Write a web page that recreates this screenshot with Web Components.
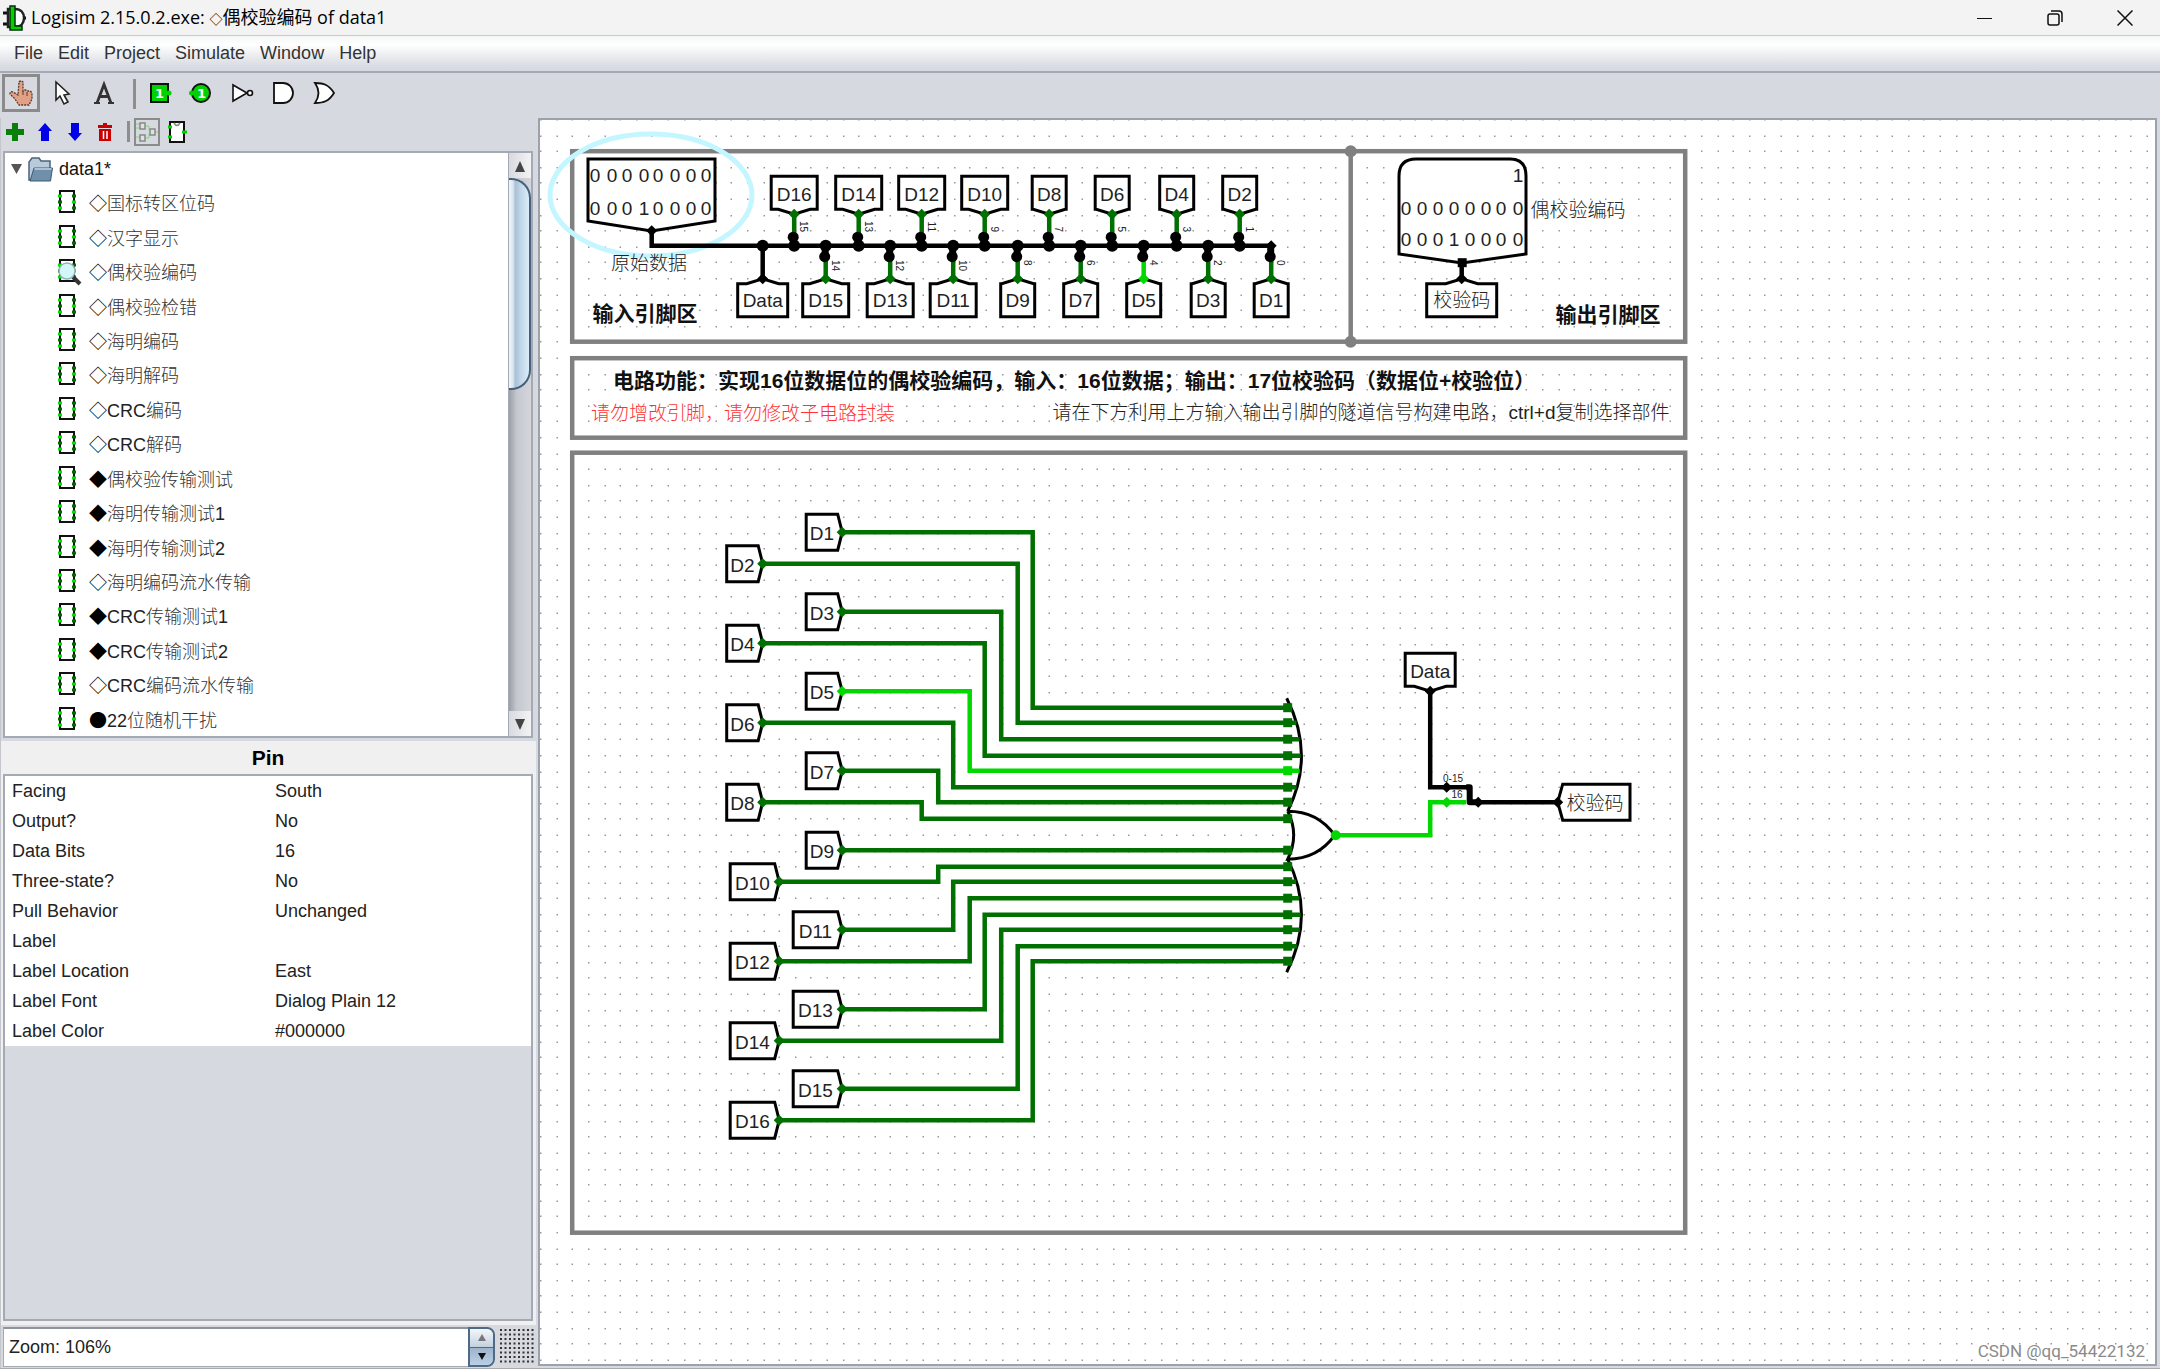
<!DOCTYPE html>
<html lang="zh-CN">
<head>
<meta charset="utf-8">
<title>Logisim 2.15.0.2.exe: ◇偶校验编码 of data1</title>
<style>
html, body { margin: 0; height: 100%; }
body {
  --ui: "Liberation Sans", "Noto Sans CJK SC", sans-serif;
  --cjk: "Noto Sans CJK SC", sans-serif;
  --panel: #d6d9df;
  --line: #9ba2ab;
  font-family: var(--ui); font-size: 18px; color: #222; background: var(--panel); overflow: hidden;
}
</style>
</head>
<body>
<logisim-window>
  <title-bar slot="title">Logisim 2.15.0.2.exe: <span style="font-size:13px">◇</span>偶校验编码 of data1</title-bar>
  <menu-bar slot="menu"></menu-bar>
  <main-tools slot="tools"></main-tools>
  <explorer-tools slot="side"></explorer-tools>
  <project-tree slot="side" name="data1*"></project-tree>
  <attribute-table slot="side" heading="Pin"></attribute-table>
  <zoom-control slot="side"></zoom-control>
  <circuit-canvas slot="canvas">CSDN @qq_54422132</circuit-canvas>
</logisim-window>
<script>
class Part extends HTMLElement {
  connectedCallback() {
    if (this.shadowRoot) return;
    this.attachShadow({ mode: 'open' }).innerHTML = `<style>:host,*{box-sizing:border-box}button{font:inherit;color:inherit;background:none;border:0;padding:0;margin:0}svg{display:block}${this.css()}</style>${this.html()}`;
  }
  css() { return ''; }
  html() { return ''; }
}

class LogisimWindow extends Part {
  css() { return `
    :host{display:flex;flex-direction:column;height:100vh;background:var(--panel);border-bottom:1px solid #aaa}
    .main{flex:1;display:flex;min-height:0}
    aside{width:536px;flex:none;display:flex;flex-direction:column;border-left:1px solid #c4c6cb}
    .view{flex:1;min-width:0;margin:0 3px 2px 2px;display:flex}
  `; }
  html() { return `<slot name="title"></slot><slot name="menu"></slot><slot name="tools"></slot>
    <div class="main"><aside><slot name="side"></slot></aside><div class="view"><slot name="canvas"></slot></div></div>`; }
}

class TitleBar extends Part {
  css() { return `
    :host{display:flex;align-items:center;height:36px;flex:none;background:#f3f3f3;border-bottom:1px solid #c9c9c9;color:#000;font:18px/36px "Open Sans","Noto Sans CJK SC",sans-serif}
    .logo{margin:0 4px 0 3px}
    h1{font:inherit;margin:0;flex:1;white-space:nowrap}
    button{width:70px;height:35px;display:grid;place-items:center}
    svg{fill:none;stroke:#111}
  `; }
  html() { return `
    <svg class="logo" width="24" height="26" viewBox="0 0 24 26">
      <path d="M0 8h5M0 19h5M19 13h4" stroke="#111" stroke-width="3"/>
      <path d="M5 4h7c6 0 9 4 9 9s-3 9-9 9H5z" fill="#fff" stroke="#222" stroke-width="2.5"/>
      <path d="M7 1h5v20h7v4H7z" fill="#00d200" stroke="#053005" stroke-width="1.5"/>
    </svg>
    <h1><slot></slot></h1>
    <button aria-label="Minimize"><svg width="16" height="16"><path d="M0 8.500h15"/></svg></button>
    <button aria-label="Restore"><svg width="16" height="16" stroke-width="1.500"><rect x="1" y="4" width="11" height="11" rx="2"/><path d="M4 1h8q3 0 3 3v8"/></svg></button>
    <button aria-label="Close"><svg width="16" height="16" stroke-width="1.500"><path d="M.5.500l15 15M15.500.500l-15 15"/></svg></button>`; }
}

class MenuBar extends Part {
  css() { return `
    :host{display:block;height:37px;flex:none;background:linear-gradient(#f4f6f6,#fff 25%,#d9dce2 85%,#d6d9df);border-bottom:2px solid #a4aab3}
    nav{display:flex;gap:15px;padding-left:14px;height:35px;align-items:center;color:#333}
  `; }
  html() { return `<nav>${['File','Edit','Project','Simulate','Window','Help'].map(t => `<button>${t}</button>`).join('')}</nav>`; }
}

class MainTools extends Part {
  css() { return `
    :host{display:flex;height:45px;flex:none;padding:1px 2px 0;gap:3px}
    button{width:38px;height:38px;display:grid;place-items:center}
    .on{border:3px solid #8b8b8b}
    i{width:3px;height:30px;background:#8e8e8e;margin:5px 2px 0 8px}
    text{font:bold 13px "DejaVu Sans",sans-serif;fill:#fff}
  `; }
  html() {
    const b = (label, s, on = '') => `<button class="${on}" aria-label="${label}"><svg width="24" height="26" viewBox="0 0 24 26">${s}</svg></button>`;
    return b('Poke', `<path d="M10 2q2-2 4 0v9l2-1q2 0 3 1l2 0q2 1 2 3v5l-3 6H10l-4-6-5-5q0-3 3-2l5 3z" fill="#e2a184" stroke="#5a3a2c" stroke-width="1.3" stroke-dasharray="2 1"/><path d="M14 11v4M18 12v4" stroke="#5a3a2c"/>`, 'on')
      + b('Edit', `<path d="M6 2v18l4-4 4 8 4-2-4-7 5-1z" fill="#fff" stroke="#222" stroke-width="1.6"/>`)
      + b('Text', `<path d="M3 23h6M17 23h6" stroke="#333" stroke-width="2"/><path d="M6 23L13 4.500L20 23M8.500 16.500h9" fill="none" stroke="#333" stroke-width="2.800"/>`)
      + '<i></i>'
      + b('Input pin', `<rect x="3" y="4" width="17" height="18" fill="#00d200" stroke="#111" stroke-width="2"/><circle cx="21" cy="13" r="2.500" fill="#00d200"/><text x="7" y="18">1</text>`)
      + b('Output pin', `<circle cx="12" cy="13" r="9" fill="#00d200" stroke="#111" stroke-width="2"/><circle cx="2.500" cy="13" r="2.500" fill="#00d200"/><text x="8" y="18">1</text>`)
      + b('NOT gate', `<path d="M3 5v16l14-8z" fill="#fff" stroke="#111" stroke-width="1.600"/><circle cx="20" cy="13" r="2.500" fill="#fff" stroke="#111" stroke-width="1.600"/>`)
      + b('AND gate', `<path d="M3 3h9a10 10 0 0 1 0 20H3z" fill="#fff" stroke="#111" stroke-width="1.800"/>`)
      + b('OR gate', `<path d="M3 3c9 0 14 2 19 10-5 8-10 10-19 10q7-10 0-20z" fill="#fff" stroke="#111" stroke-width="1.800"/>`);
  }
}

class ExplorerTools extends Part {
  css() { return `
    :host{display:flex;height:33px;flex:none;padding-left:1px;gap:4px}
    button{width:26px;height:28px;display:grid;place-items:center}
    .on{border:2px solid #8b8b8b}
    i{width:3px;height:21px;background:#8e8e8e;margin:3px 0 0 5px}
  `; }
  html() {
    const b = (label, s, on = '') => `<button class="${on}" aria-label="${label}"><svg width="22" height="24" viewBox="0 0 22 24">${s}</svg></button>`;
    return b('Add circuit', `<path d="M8 3h6v6h6v6h-6v6H8v-6H2V9h6z" fill="#0a7d0a"/>`)
      + b('Move up', `<path d="M11 3l7 8h-3v10H7V11H4z" fill="#0000e6"/>`)
      + b('Move down', `<path d="M11 21l7-8h-3V3H7v10H4z" fill="#0000e6"/>`)
      + b('Remove', `<path d="M4 5h5V3h4v2h5v3H4zM5 9h12v12H5z" fill="#cc0000"/><path d="M9.500 11v8M13 11v8" stroke="#fff" stroke-width="1.500"/>`)
      + '<i></i>'
      + b('Edit layout', `<path d="M0 4h4M0 8h4M9 6h4v4M0 17h4M9 18h4v-4M17 12h5" fill="none" stroke="#7fd67f"/><g fill="#dfe1e6" stroke="#888" stroke-width="1.500"><rect x="4" y="3" width="5" height="6"/><rect x="4" y="15" width="5" height="6"/><rect x="14" y="9" width="5" height="6"/></g>`, 'on')
      + b('Edit appearance', `<rect x="4" y="2" width="14" height="20" fill="#fff" stroke="#111" stroke-width="2"/><path d="M8 3q3 5 6 0" fill="none" stroke="#888" stroke-width="1.500"/><path d="M2 7h4M2 17h4M16 12h5" stroke="#00d200" stroke-width="3"/>`);
  }
}

class CircuitIcon extends Part {
  css() { return `:host{display:block;width:26px;height:30px}svg{overflow:visible}`; }
  html() {
    const lens = this.hasAttribute('open') ? `<path d="M16 21l7 7" stroke="#333" stroke-width="4"/><circle cx="10" cy="15" r="8" fill="#d3f6f8" stroke="#8fb5b8" stroke-width="1.500"/>` : '';
    return `<svg width="26" height="30" viewBox="0 0 26 30"><rect x="3" y="4" width="14" height="21" fill="#fff" stroke="#111" stroke-width="2"/>
      <path d="M1 9h4M1 21h4M15 15h4" stroke="#00e000" stroke-width="3"/><path d="M1 15h4M15 9h4M15 21h4" stroke="#006a00" stroke-width="3"/>${lens}</svg>`;
  }
}

class ProjectTree extends Part {
  css() { return `
    :host{display:flex;height:587px;flex:none;margin:0 3px 0 2px;border:2px solid #a4aab3;background:#fff}
    .tree{flex:1;display:flex;flex-direction:column;color:#111}
    .root{display:flex;align-items:center;height:32px;padding-left:6px}
    .root svg{margin-right:6px}
    ul{list-style:none;margin:0;padding:0;flex:1;display:grid;grid-auto-rows:1fr}
    li{display:flex;align-items:center;padding-left:52px;gap:6px;white-space:nowrap}
    li span{color:#333;font-weight:300}
    b{font:18px var(--cjk);color:#000}
    em{font-style:normal;color:#222;font-weight:400}
    .bar{width:23px;display:flex;flex-direction:column;border-left:1px solid #a4aab3;background:linear-gradient(90deg,#9b9ea6,#c6c8cf 35%,#d4d6dc)}
    .bar button{height:25px;background:linear-gradient(90deg,#d8dae0,#f3f3f5);display:grid;place-items:center}
    .thumb{height:212px;border:2px solid #44617b;border-left:0;border-radius:0 20px 20px 0;background:linear-gradient(90deg,#f0f5fa,#dbe6f0 20%,#a9c0d6 32%,#c2d7e9 60%,#dcecf8)}
    .gap{flex:1}
  `; }
  html() {
    const rows = ['◇国标转区位码','◇汉字显示','◇偶校验编码','◇偶校验检错','◇海明编码','◇海明解码','◇CRC编码','◇CRC解码','◆偶校验传输测试','◆海明传输测试1','◆海明传输测试2','◇海明编码流水传输','◆CRC传输测试1','◆CRC传输测试2','◇CRC编码流水传输','●22位随机干扰'];
    const item = (t, i) => `<li><circuit-icon ${i === 2 ? 'open' : ''}></circuit-icon><span><b>${t[0]}</b>${t.slice(1).replace(/[A-Z0-9]+/g, '<em>$&</em>')}</span></li>`;
    return `<div class="tree"><div class="root">
        <svg width="11" height="12"><path d="M0 1h11L5.500 11z" fill="#555"/></svg>
        <svg width="25" height="25" viewBox="0 0 25 25"><path d="M1 23V5l3-4h7l2 3h9v19z" fill="#b9cbdb" stroke="#4b6479" stroke-width="1.500"/><path d="M2 24L6 11h18.500l-2 13z" fill="#6f8faa" stroke="#3f5a72"/><path d="M6.500 12h17" stroke="#a9c2d6" stroke-width="2"/></svg>
        ${this.getAttribute('name')}</div>
      <ul>${rows.map(item).join('')}</ul></div>
      <div class="bar"><button aria-label="Scroll up"><svg width="12" height="12"><path d="M1 12h10L6 1z" fill="#444"/></svg></button><div class="thumb"></div><div class="gap"></div>
      <button aria-label="Scroll down"><svg width="12" height="12"><path d="M1 1h10L6 12z" fill="#444"/></svg></button></div>`;
  }
}

class AttributeTable extends Part {
  css() { return `
    :host{display:flex;flex-direction:column;flex:1;min-height:0;margin-top:3px;background:#f0f0f0;padding:0 3px 4px 2px;color:#222}
    h2{font:bold 21px/33px var(--ui);margin:0;text-align:center;color:#000}
    .box{flex:1;border:2px solid #a4aab3;background:var(--panel)}
    table{width:100%;border-collapse:collapse;table-layout:fixed;background:#fff}
    td,th{height:30px;padding:0 0 0 7px;text-align:left;font-weight:400}
  `; }
  html() {
    const rows = [['Facing','South'],['Output?','No'],['Data Bits','16'],['Three-state?','No'],['Pull Behavior','Unchanged'],['Label',''],['Label Location','East'],['Label Font','Dialog Plain 12'],['Label Color','#000000']];
    return `<h2>${this.getAttribute('heading')}</h2><div class="box"><table>${rows.map(r => `<tr><th scope="row">${r[0]}</th><td>${r[1]}</td></tr>`).join('')}</table></div>`;
  }
}

class ZoomControl extends Part {
  css() { return `
    :host{display:flex;height:43px;flex:none;padding:2px 0 1px 2px}
    input{flex:1;min-width:0;border:1px solid #a4aab3;border-top:2px solid #8f949c;background:#fff;font:18px var(--ui);color:#222;padding:0 0 0 5px;margin:0;border-right:0;outline:0;border-radius:0}
    .spin{width:27px;display:flex;flex-direction:column;border:2px solid #4d6a86;border-radius:0 8px 8px 0;overflow:hidden;background:#b5c7d8}
    .spin button{flex:1;display:grid;place-items:center;background:linear-gradient(#f4f7fa,#c3d1de)}
    .spin button+button{background:linear-gradient(#9db4cb,#b9d0e6);border-top:1px solid #4d6a86}
    svg.g{margin:2px 1px 0 5px}
  `; }
  html() {
    let d = '';
    for (let y = 0; y < 8; y++) for (let x = 0; x < 8; x++) d += `M${x * 4.5} ${y * 4.5}h2v2h-2z`;
    return `<input aria-label="Zoom" value="Zoom: 106%"><div class="spin"><button aria-label="Zoom in"><svg width="8" height="7"><path d="M0 7h8L4 0z" fill="#777"/></svg></button><button aria-label="Zoom out"><svg width="8" height="7"><path d="M0 0h8L4 7z" fill="#111"/></svg></button></div><svg class="g" width="35" height="36"><path d="${d}" fill="#333"/></svg>`;
  }
}

class CircuitCanvas extends Part {
  css() { return `
    :host{display:block;flex:1;position:relative;border:2px solid var(--line);background:#fff;overflow:hidden}
    svg{width:100%;height:100%}
    text{font:19px var(--ui);fill:#222;text-anchor:middle}
    .cn{font-weight:300;fill:#222}
    .bold{font-size:21px;font-weight:700;fill:#111}
    .warn{fill:#f33;font-weight:300}
    .tiny{font-size:10px;fill:#222}
    .s{text-anchor:start}.e{text-anchor:end}
    .mark{position:absolute;right:10px;bottom:3px;font:17px/20px Roboto,sans-serif;color:#8a8a8a}
  `; }
  html() {
    // Grid points snap to device pixels: one circuit grid step is 10.6 logical pixels at 106% zoom.
    const X = k => 525.7 + 1.5 * Math.round(10.6 * k - 1);
    const Y = k => 136.2 + 1.5 * Math.round(10.6 * k - 0.89);
    const OFF = '#007000', ON = '#00d800', BUS = '#000';
    let o = '', grid = '';
    for (let j = -1; j < 78; j++) for (let i = 1; i < 103; i++)
      grid += `M${(525 + 1.5 * Math.floor(10.6 * i)).toFixed(1)} ${(135.5 + 1.5 * Math.floor(10.6 * j)).toFixed(1)}h1.5v1.5h-1.5z`;
    o += `<path d="${grid}" fill="#999"/>`;
    const text = (x, y, t, c = '') => `<text x="${x}" y="${y}" class="${c}">${t}</text>`;
    const wire = (pts, c = OFF, w = 4.5) => `<polyline points="${pts.map(p => p.join()).join(' ')}" fill="none" stroke="${c}" stroke-width="${w}"/>`;
    const gem = (x, y, c) => `<path d="M${x} ${y - 5.5}l5.500 5.500-5.500 5.500-5.500-5.500z" fill="${c}"/>`;
    const shape = d => `<path d="${d}" fill="#fff" stroke="#000" stroke-width="3"/>`;
    const dot = (x, y, r, c = '#000') => `<circle cx="${x}" cy="${y}" r="${r}" fill="${c}"/>`;
    // s is +1 for a box above its port and -1 for a box below it.
    const vTunnel = (x, y, t, half, s, c, cls) => {
      const a = Math.min(half, 16);
      return shape(`M${x - half} ${y - 38 * s}H${x + half}V${y - 5 * s}H${x + a}L${x} ${y}L${x - a} ${y - 5 * s}H${x - half}Z`)
        + text(x, s > 0 ? y - 13 : y + 28, t, cls) + gem(x, y, c);
    };
    const hTunnel = (x, y, t, w, c) => shape(`M${x - w} ${y - 18}H${x - 4.5}L${x} ${y}L${x - 4.5} ${y + 18}H${x - w}Z`)
      + text(x - (w + 4.5) / 2, y + 8, t) + gem(x, y, c);

    // frames
    const frame = (x, y, r, b) => `<rect x="${x}" y="${y}" width="${r - x}" height="${b - y}" fill="none" stroke="#808080" stroke-width="4.500"/>`;
    o += frame(X(3), Y(1), X(73), Y(13)) + frame(X(3), Y(14), X(73), Y(19)) + frame(X(3), Y(20), X(73), Y(69));
    o += wire([[X(52), Y(1)], [X(52), Y(13)]], '#808080') + dot(X(52), Y(1), 6, '#808080') + dot(X(52), Y(13), 6, '#808080');
    o += `<ellipse cx="651" cy="195" rx="101" ry="61" fill="none" stroke="#c4f6ff" stroke-width="5"/>`;

    // input pin
    o += shape('M588 159H715V221L651.500 231L588 221Z');
    const col = [595, 612, 627, 644, 658, 675, 691, 706];
    [...'00000000'].forEach((b, i) => o += text(col[i], 182, b));
    [...'00010000'].forEach((b, i) => o += text(col[i], 215, b));
    o += gem(X(8), Y(6), BUS) + wire([[X(8), Y(6)], [X(8), Y(7)], [X(47), Y(7)]], BUS);
    o += text(649, 270, '原始数据', 'cn') + text(645, 321, '输入引脚区', 'bold');

    // splitter taps
    const bus = Y(7);
    for (let n = 1; n <= 16; n++) {
      const k = 49 - 2 * n, x = X(k), up = n % 2 === 0, c = n === 5 ? ON : OFF, half = n > 9 ? 23 : 17;
      const end = up ? Y(5) : Y(9), joint = up ? bus - 8.5 : bus + 11;
      o += wire([[x, end], [x, joint]], c) + wire([[x - .5, joint], [x - .5, bus]], BUS, 7)
        + (n === 1 ? gem(x, bus, BUS) : dot(x, bus, 6)) + dot(x - 1, joint, 5.5)
        + vTunnel(x, end, 'D' + n, half, up ? 1 : -1, c);
      const ty = up ? 232 : 260;
      o += `<text class="tiny ${up ? 'e' : 's'}" transform="translate(${x + 6} ${ty}) rotate(90)">${n - 1}</text>`;
    }
    o += wire([[X(15), bus], [X(15), Y(9)]], BUS) + dot(X(15), bus, 6) + vTunnel(X(15), Y(9), 'Data', 25, -1, BUS);

    // output pin
    o += shape('M1399 176Q1399 159 1416 159H1510Q1526 159 1526 176V254L1462 263L1399 254Z');
    const out = [1406, 1422, 1438, 1454, 1470, 1486, 1501, 1518];
    o += text(1518, 182, '1');
    [...'00000000'].forEach((b, i) => o += text(out[i], 215, b));
    [...'00010000'].forEach((b, i) => o += text(out[i], 246, b));
    o += wire([[X(59), Y(8)], [X(59), Y(9)]], BUS) + `<rect x="${X(59) - 4}" y="${Y(8) - 4}" width="9" height="9"/>`;
    o += vTunnel(X(59), Y(9), '校验码', 35, -1, BUS, 'cn');
    o += text(1578, 217, '偶校验编码', 'cn') + text(1608, 322, '输出引脚区', 'bold');

    // notes
    o += text(613, 388, '电路功能：实现16位数据位的偶校验编码，输入：16位数据；输出：17位校验码（数据位+校验位）', 'bold s');
    o += text(743, 420, '请勿增改引脚，请勿修改子电路封装', 'warn');
    o += text(1361, 419, '请在下方利用上方输入输出引脚的隧道信号构建电路，ctrl+d复制选择部件', 'cn');

    // parity gate
    const gx = X(48), gy = Y(44);
    o += `<g fill="none" stroke="#000" stroke-width="3"><path d="M${gx} ${gy - 24}C${gx + 20} ${gy - 24} ${gx + 35} ${gy - 17} ${gx + 47} ${gy}C${gx + 35} ${gy + 17} ${gx + 20} ${gy + 24} ${gx} ${gy + 24}Q${gx + 12} ${gy} ${gx} ${gy - 24}" fill="#fff"/>
      <path d="M${gx - 1} ${gy - 137}Q${gx + 28} ${gy - 80} ${gx} ${gy - 24}M${gx} ${gy + 24}Q${gx + 28} ${gy + 80} ${gx - 1} ${gy + 137}"/></g>`;
    const vert = [0, 32, 31, 30, 29, 28, 27, 26, 25, 0, 26, 27, 28, 29, 30, 31, 32];
    const row = [0, 25, 27, 30, 32, 35, 37, 40, 42, 45, 47, 50, 52, 55, 57, 60, 62];
    for (let n = 1; n <= 16; n++) {
      const px = X(n % 2 ? 20 : n > 9 ? 16 : 15), py = Y(row[n]), qy = Y(n < 9 ? 35 + n : 36 + n), c = n === 5 ? ON : OFF;
      const d = Math.abs(qy - gy), stub = d < 24 ? 3 : 13 * (1 - ((d - 80) / 57) ** 2);
      const end = [gx + Math.max(3, stub), qy];
      o += wire(vert[n] ? [[px, py], [X(vert[n]), py], [X(vert[n]), qy], end] : [[px, py], end], c)
        + `<rect x="${gx - 4.5}" y="${qy - 4.5}" width="9" height="9" fill="${c}"/>` + hTunnel(px, py, 'D' + n, n > 9 ? 49 : 36, c);
    }
    o += wire([[X(51), gy], [X(57), gy], [X(57), Y(42)], [X(60) - 12, Y(42)]], ON) + dot(X(51), gy, 5, ON) + gem(X(58), Y(42), ON);

    // output splitter
    o += wire([[X(57), Y(35)], [X(57), Y(41)], [X(60) - 8, Y(41)]], BUS);
    o += `<path d="M${X(60) - 12} ${Y(41)}H${X(60) - 8.5}V${Y(42)}H${X(60)}" fill="none" stroke="#000" stroke-width="6" stroke-linejoin="round"/>`;
    o += wire([[X(60), Y(42)], [X(65), Y(42)]], BUS) + gem(X(58), Y(41), BUS) + gem(X(60), Y(42), BUS);
    o += text(1453, 782, '0-15', 'tiny') + text(1457, 798, '16', 'tiny');
    o += vTunnel(X(57), Y(35), 'Data', 25, 1, BUS);
    o += shape(`M${X(65)} ${Y(42)}L${X(65) + 5} ${Y(42) - 18}H1630V${Y(42) + 18}H${X(65) + 5}Z`) + text(1595, 810, '校验码', 'cn') + gem(X(65), Y(42), BUS);

    return `<svg role="img" aria-label="偶校验编码"><g transform="translate(-540 -120)">${o}</g></svg><div class="mark"><slot></slot></div>`;
  }
}

customElements.define('circuit-icon', CircuitIcon);
customElements.define('title-bar', TitleBar);
customElements.define('menu-bar', MenuBar);
customElements.define('main-tools', MainTools);
customElements.define('explorer-tools', ExplorerTools);
customElements.define('project-tree', ProjectTree);
customElements.define('attribute-table', AttributeTable);
customElements.define('zoom-control', ZoomControl);
customElements.define('circuit-canvas', CircuitCanvas);
customElements.define('logisim-window', LogisimWindow);
</script>
</body>
</html>
